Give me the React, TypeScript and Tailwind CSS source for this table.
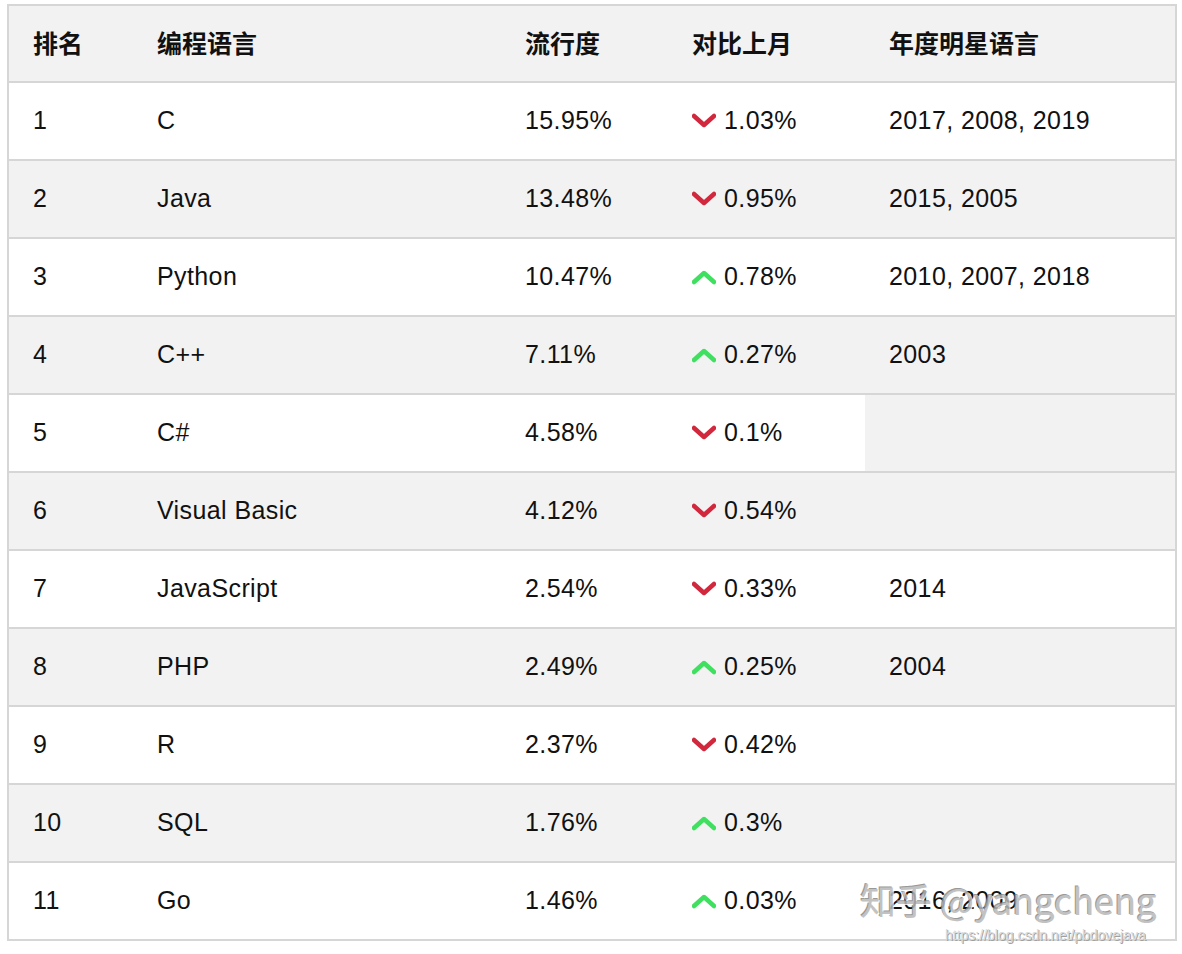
const rows: [string, string, string, 'up' | 'down', string, string][] = [
  ['1', 'C', '15.95%', 'down', '1.03%', '2017, 2008, 2019'],
  ['2', 'Java', '13.48%', 'down', '0.95%', '2015, 2005'],
  ['3', 'Python', '10.47%', 'up', '0.78%', '2010, 2007, 2018'],
  ['4', 'C++', '7.11%', 'up', '0.27%', '2003'],
  ['5', 'C#', '4.58%', 'down', '0.1%', ''],
  ['6', 'Visual Basic', '4.12%', 'down', '0.54%', ''],
  ['7', 'JavaScript', '2.54%', 'down', '0.33%', '2014'],
  ['8', 'PHP', '2.49%', 'up', '0.25%', '2004'],
  ['9', 'R', '2.37%', 'down', '0.42%', ''],
  ['10', 'SQL', '1.76%', 'up', '0.3%', ''],
  ['11', 'Go', '1.46%', 'up', '0.03%', '2016, 2009'],
];

function Chevron({ dir }: { dir: 'up' | 'down' }) {
  const down = dir === 'down';
  return (
    <svg width="24" height="16" viewBox="0 0 24 16" className="mr-[8px] shrink-0">
      <polyline
        points={down ? '2,3 12,12 22,3' : '2,13 12,4 22,13'}
        fill="none"
        stroke={down ? '#d2283d' : '#3fe060'}
        strokeWidth="4.5"
        strokeLinecap="round"
        strokeLinejoin="round"
      />
    </svg>
  );
}

const cols = 'grid grid-cols-[124px_368px_167px_197px_1fr]';

export default function App() {
  return (
    <div className="relative h-[954px] w-[1182px] overflow-hidden bg-white pl-[7px] pr-[5px] pt-[4px] font-['Liberation_Sans','Noto_Sans_CJK_SC',sans-serif] text-[25px] tracking-[0.4px] text-[#111]">
      <div className="border-2 border-[#d6d6d6] border-b-0">
        {/* 表头 */}
        <div className={`${cols} h-[75px] items-center bg-[#f2f2f2] pb-[2px] font-bold tracking-normal`}>
          <div className="pl-[24px] font-['Noto_Sans_CJK_SC',sans-serif]">排名</div>
          <div className="pl-[24px] font-['Noto_Sans_CJK_SC',sans-serif]">编程语言</div>
          <div className="pl-[24px] font-['Noto_Sans_CJK_SC',sans-serif]">流行度</div>
          <div className="pl-[24px] font-['Noto_Sans_CJK_SC',sans-serif]">对比上月</div>
          <div className="pl-[24px] font-['Noto_Sans_CJK_SC',sans-serif]">年度明星语言</div>
        </div>
        {rows.map(([rank, lang, pop, dir, diff, years], i) => (
          <div
            key={rank}
            className={`${cols} h-[78px] items-stretch border-t-2 border-[#d6d6d6] ${i % 2 === 1 ? 'bg-[#f2f2f2]' : 'bg-white'}`}
          >
            <div className="flex items-center pl-[24px]">{rank}</div>
            <div className="flex items-center pl-[24px]">{lang}</div>
            <div className="flex items-center pl-[24px]">{pop}</div>
            <div className="flex items-center pl-[24px]">
              <Chevron dir={dir} />
              {diff}
            </div>
            <div className={`flex items-center pl-[24px] ${rank === '5' ? 'bg-[#f2f2f2]' : ''}`}>{years}</div>
          </div>
        ))}
        <div className="border-t-2 border-[#d6d6d6]" />
      </div>

      {/* 水印 */}
      <div className="pointer-events-none absolute left-[860px] top-[881px] whitespace-nowrap text-[36px] leading-none tracking-normal text-[#b8b8b8] opacity-85 [text-shadow:1px_1px_0_#fff,-1px_-1px_0_#888] font-['Noto_Sans_CJK_SC',sans-serif]">
        知乎 @yangcheng
      </div>
      <div className="pointer-events-none absolute left-[945px] top-[928px] whitespace-nowrap text-[14px] leading-none tracking-normal text-[#dadada] [text-shadow:1px_1px_0_#a0a0a0]">
        https://blog.csdn.net/pbdovejava
      </div>
    </div>
  );
}
